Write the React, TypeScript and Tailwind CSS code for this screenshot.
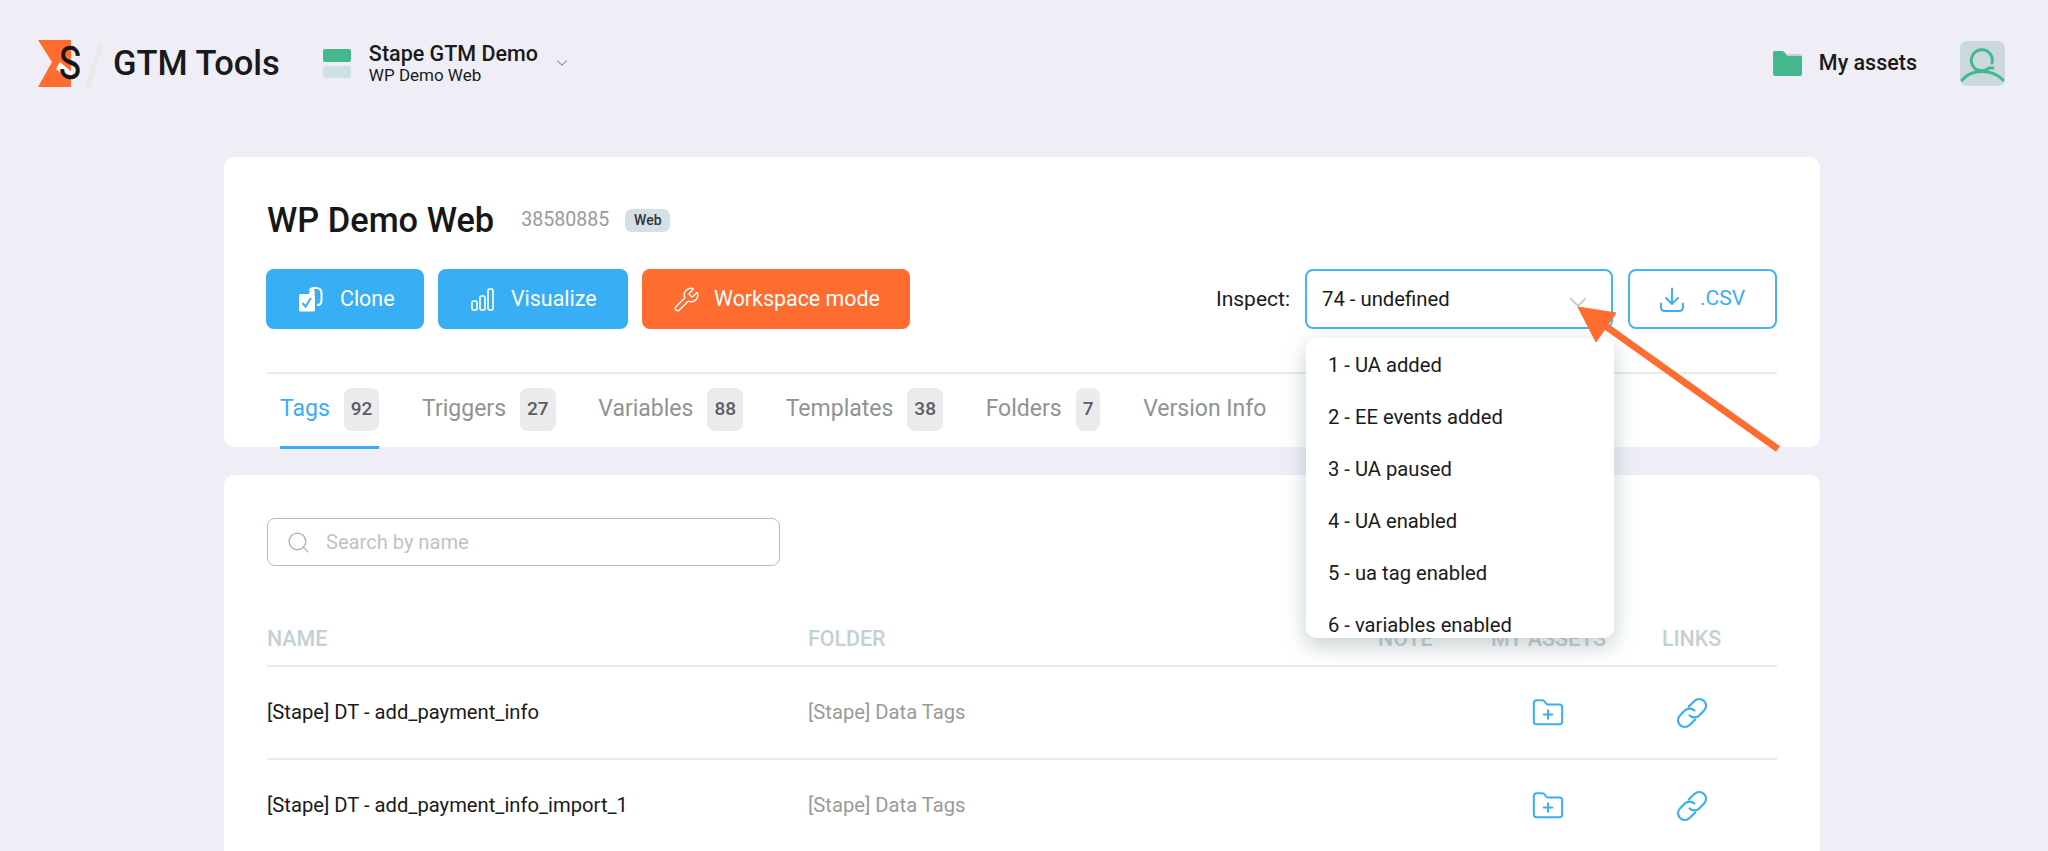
import React from "react";
import { Search, Wrench, FolderPlus, ChevronDown } from "lucide-react";

const tabs = [
  { label: "Tags", count: "92", active: true },
  { label: "Triggers", count: "27" },
  { label: "Variables", count: "88" },
  { label: "Templates", count: "38" },
  { label: "Folders", count: "7" },
  { label: "Version Info" },
];

const options = [
  "1 - UA added",
  "2 - EE events added",
  "3 - UA paused",
  "4 - UA enabled",
  "5 - ua tag enabled",
  "6 - variables enabled",
];

const rows = ["[Stape] DT - add_payment_info", "[Stape] DT - add_payment_info_import_1"];

function Logo() {
  return (
    <svg width="68" height="50" viewBox="0 0 68 50" className="shrink-0">
      <path d="M0 2 H33 V49 H0 L14 24 Z" fill="#ff6c2f" />
      <path d="M22 24 L36 36 L31 41 L18 31 Z" fill="#ffffff" />
      <text transform="translate(21 41) scale(0.8 1)" fontFamily="Roboto, sans-serif" fontWeight="400" fontSize="46" stroke="#141414" strokeWidth="0.5" fill="#141414">S</text>
      <path d="M63 6 L50 50" stroke="#e9e9ea" strokeWidth="5" fill="none" />
    </svg>
  );
}

function CloneIcon() {
  return (
    <svg width="24" height="25" viewBox="0 0 24 25" fill="none" className="shrink-0">
      <path d="M11 4 Q11 1 15 1 H17 Q22.5 1 22.5 6 V14 Q22.5 18 18 18" stroke="#fff" strokeWidth="2" />
      <path d="M10 6 Q12 2 15 2 L16 7 H10 Z" fill="#fff" />
      <rect x="0" y="7" width="16" height="17.5" rx="1.5" fill="#fff" />
      <path d="M3.5 16 L6.5 19.5 L12 11" stroke="#38aef5" strokeWidth="2" />
    </svg>
  );
}

function BarsIcon() {
  return (
    <svg width="23" height="23" viewBox="0 0 23 23" fill="none" stroke="#fff" strokeWidth="1.6" className="shrink-0">
      <rect x="1" y="13" width="5" height="9" rx="1.5" />
      <rect x="9" y="8" width="5" height="14" rx="1.5" />
      <rect x="17" y="1" width="5" height="21" rx="1.5" />
    </svg>
  );
}

function DownloadIcon() {
  return (
    <svg width="24" height="25" viewBox="0 0 24 25" fill="none" stroke="#38aef5" strokeWidth="1.9" strokeLinecap="round" strokeLinejoin="round">
      <path d="M12 1.5 V17 M6 11 L12 17 L18 11" />
      <path d="M1 16.5 V20 Q1 24 5 24 H19 Q23 24 23 20 V16.5" />
    </svg>
  );
}

function ChainIcon() {
  return (
    <svg width="34" height="34" viewBox="0 0 30 30" fill="none" stroke="#38aef5" strokeWidth="1.9" strokeLinecap="round" className="shrink-0">
      <g transform="rotate(-45 15 15)">
        <path d="M13 21 H6 a6 6 0 0 1 0 -12 H12 a6 6 0 0 1 6 6" />
        <path d="M17 9 H24 a6 6 0 0 1 0 12 H18 a6 6 0 0 1 -6 -6" />
      </g>
    </svg>
  );
}

function StackIcon() {
  return (
    <div className="flex w-[28px] shrink-0 flex-col gap-[4px]">
      <div className="h-[13px] rounded-[2px] bg-[#44b78f]" />
      <div className="h-[12px] rounded-[2px] bg-[#cfdfe6]" />
    </div>
  );
}

function FolderIcon() {
  return (
    <svg width="29" height="25" viewBox="0 0 29 25" className="shrink-0">
      <path d="M12 3 H27 Q29 3 29 5 V8 H12 Z" fill="#c9cfd0" />
      <path d="M0 2 Q0 0 2 0 H9 Q11 0 13 3 L14 5 H28 Q29 5 29 6 V23 Q29 25 27 25 H2 Q0 25 0 23 Z" fill="#44b78f" />
    </svg>
  );
}

function Avatar() {
  return (
    <div className="flex h-[45px] w-[45px] items-end overflow-hidden rounded-[7px] bg-[#cad9de]">
      <svg width="45" height="45" viewBox="0 0 45 45" fill="none" stroke="#44b78f" strokeWidth="3" strokeLinecap="round">
        <path d="M33 27 H29 A10.5 10.5 0 1 1 32 22" />
        <path d="M2 39 C8 32 15 30.5 22 30.5 C29 30.5 36 32 43 39" />
      </svg>
    </div>
  );
}

export default function App() {
  return (
    <div className="h-[851px] w-[2048px] overflow-hidden bg-[#efeef6] font-['Roboto',sans-serif] text-[#1a1a1a]">
      <header className="mb-[31px] flex h-[126px] items-center pl-[38px] pr-[43px]">
        <Logo />
        <span className="ml-[7px] text-[34.5px] font-medium leading-[38px]">GTM Tools</span>
        <div className="ml-[43px] flex items-center">
          <StackIcon />
          <div className="ml-[18px] flex flex-col">
            <span className="text-[21.5px] font-medium leading-[24px]">Stape GTM Demo</span>
            <span className="text-[17px] leading-[19px]">WP Demo Web</span>
          </div>
          <ChevronDown size={18} strokeWidth={1.4} className="ml-[15px] text-[#7d8488]" />
        </div>
        <div className="ml-auto flex items-center">
          <FolderIcon />
          <span className="ml-[17px] text-[21.5px] font-medium leading-[24px]">My assets</span>
          <div className="ml-[43px]"><Avatar /></div>
        </div>
      </header>

      <main className="relative ml-[224px] w-[1596px]">
        <section className="h-[290px] rounded-[10px] bg-white px-[43px] pt-[44px]">
          <div className="flex h-[38px] items-center">
            <h1 className="text-[34.4px] font-medium leading-[38px] text-[#171717]">WP Demo Web</h1>
            <span className="ml-[27px] text-[19.6px] text-[#9a9a9a]">38580885</span>
            <span className="ml-[16px] flex h-[23px] w-[45px] items-center justify-center rounded-[7px] bg-[#d3e0e6] text-[14px] font-medium text-[#333]">Web</span>
          </div>

          <div className="mt-[30px] flex h-[60px]">
            <button className="-ml-[1px] flex w-[158px] items-center gap-[17px] rounded-[8px] bg-[#38aef5] pl-[33px] text-[21.4px] text-white">
              <CloneIcon />Clone
            </button>
            <button className="ml-[14px] flex w-[190px] items-center gap-[17px] rounded-[8px] bg-[#38aef5] pl-[33px] text-[21.4px] text-white">
              <BarsIcon />Visualize
            </button>
            <button className="ml-[14px] flex w-[268px] items-center gap-[14px] rounded-[8px] bg-[#ff6c2f] pl-[31px] text-[21.4px] text-white">
              <Wrench size={27} strokeWidth={1.3} />Workspace mode
            </button>
            <div className="ml-auto flex items-center">
              <span className="mr-[15px] mt-[1px] text-[21px]">Inspect:</span>
              <div className="flex h-[60px] w-[308px] items-center justify-between rounded-[8px] border-2 border-[#45b3f6] pl-[15px] pr-[24px] text-[20.3px]">
                <span>74 - undefined</span>
                <svg width="18" height="10" viewBox="0 0 18 10" fill="none" stroke="#c3d0d4" strokeWidth="2" className="mt-[6px]"><path d="M1 1 L9 9 L17 1" /></svg>
              </div>
              <button className="ml-[15px] flex h-[60px] w-[149px] items-center justify-center gap-[16px] rounded-[8px] border-2 border-[#45b3f6] text-[21px] text-[#38aef5]">
                <DownloadIcon />.CSV
              </button>
            </div>
          </div>

          <div className="mt-[43px] h-[2px] bg-[#e9e9ee]" />

          <nav className="flex h-[75px] gap-[42.7px] pl-[13px]">
            {tabs.map((t) => (
              <div key={t.label} className={"flex h-full items-start gap-[14px] pt-[14px] " + (t.active ? "border-b-[3px] border-[#38aef5]" : "")}>
                <span className={"flex h-[43px] items-center text-[23px] " + (t.active ? "text-[#38aef5]" : "text-[#8f9396]")}>{t.label}</span>
                {t.count && (
                  <span className="flex h-[43px] min-w-[24px] items-center justify-center rounded-[8px] bg-[#ebebee] px-[7px] text-[19px] font-medium text-[#5a5d60]">{t.count}</span>
                )}
              </div>
            ))}
          </nav>
        </section>

        <section className="mt-[28px] h-[400px] rounded-[10px] bg-white px-[43px] pt-[43px]">
          <div className="flex h-[48px] w-[513px] items-center rounded-[8px] border border-[#aebfc4] pl-[18px]">
            <Search size={25} strokeWidth={1.3} className="text-[#a9b3b8]" />
            <span className="ml-[15px] text-[20.1px] text-[#b8c5cc]">Search by name</span>
          </div>

          <div className="mt-[43px] grid h-[58px] grid-cols-[541px_570px_113px_171px_115px] items-center border-b-2 border-[#ebebee] pt-[4px] text-[21.4px] font-medium text-[#c3d0d4]">
            <span>NAME</span>
            <span>FOLDER</span>
            <span>NOTE</span>
            <span>MY ASSETS</span>
            <span>LINKS</span>
          </div>

          {rows.map((r) => (
            <div key={r} className="grid h-[93px] grid-cols-[541px_570px_113px_171px_115px] items-center border-b-2 border-[#ebebee] text-[20.2px]">
              <span>{r}</span>
              <span className="text-[#9a9a9a]">[Stape] Data Tags</span>
              <span />
              <span className="pl-[40px]"><FolderPlus size={34} strokeWidth={1.4} className="text-[#38aef5]" /></span>
              <span className="pl-[13px]"><ChainIcon /></span>
            </div>
          ))}
        </section>

        <div className="absolute left-[1082px] top-[181px] z-10 h-[300px] w-[308px] overflow-hidden rounded-[10px] bg-white shadow-[0_8px_22px_rgba(90,120,120,0.35)]">
          {options.map((o) => (
            <div key={o} className="flex h-[52px] items-center pl-[22px] text-[20.2px] first:mt-[1px]">{o}</div>
          ))}
        </div>

        <svg className="pointer-events-none absolute left-[1340px] top-[140px] z-20" width="250" height="170" viewBox="0 0 250 170" fill="none">
          <path d="M14 10 L52 16 L32 45 Z" fill="#ff6c2f" stroke="#ff6c2f" strokeWidth="1" />
          <path d="M40 28 L214 152" stroke="#ff6c2f" strokeWidth="7" />
        </svg>
      </main>
    </div>
  );
}
